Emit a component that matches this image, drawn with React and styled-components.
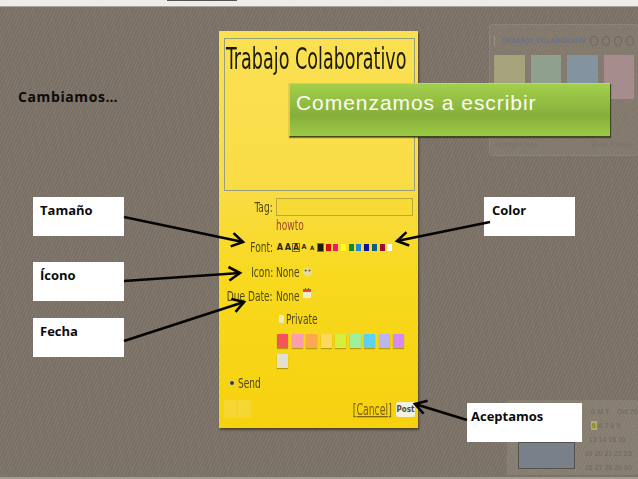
import styled, { createGlobalStyle } from "styled-components";

const GlobalStyle = createGlobalStyle`
  html, body { margin: 0; padding: 0; background: #7d7369; }
  body { font-family: "Open Sans", "Liberation Sans", sans-serif; }
`;

const Slide = styled.div`
  position: relative;
  width: 638px;
  height: 479px;
  overflow: hidden;
  background-color: #7e7469;
  background-image: repeating-linear-gradient(
    115deg,
    rgba(255, 255, 255, 0.035) 0 1px,
    rgba(0, 0, 0, 0.035) 1px 3px
  );
`;

const TopBar = styled.div`
  position: absolute;
  inset: 0 0 auto 0;
  height: 6px;
  background: #ececea;
  border-bottom: 1px solid #a8a39d;
`;

const TopMark = styled.div`
  position: absolute;
  left: 167px;
  top: 0;
  width: 70px;
  height: 1px;
  background: #55534f;
`;

const BottomLine = styled.div`
  position: absolute;
  inset: auto 0 0 0;
  height: 2px;
  background: #a39c93;
`;

const Heading = styled.div`
  position: absolute;
  left: 18px;
  top: 87px;
  font-size: 14px;
  font-weight: 700;
  letter-spacing: 0.6px;
  color: #0c0b0a;
`;

const Label = styled.div`
  position: absolute;
  left: ${(p) => p.$x}px;
  top: ${(p) => p.$y}px;
  width: ${(p) => p.$w}px;
  height: 39px;
  box-sizing: border-box;
  padding: 4px ${(p) => p.$pad}px;
  background: #fff;
  font-size: 13px;
  font-weight: 700;
  color: #0b0b0b;
`;

const Note = styled.div`
  position: absolute;
  left: 219px;
  top: 31px;
  width: 199px;
  height: 397px;
  box-sizing: border-box;
  padding: 7px 3px 0 5px;
  display: flex;
  flex-direction: column;
  background: linear-gradient(180deg, #fbe053 0%, #f9dc45 40%, #f8d91e 62%, #f6d10e 100%);
  box-shadow: 1px 2px 2px rgba(50, 40, 20, 0.65);
  font-family: "DejaVu Sans Condensed", "DejaVu Sans", sans-serif;
  font-size: 12px;
  color: #4f4812;
`;

const TitleArea = styled.div`
  height: 151px;
  flex: none;
  border: 1px solid #97a07b;
  overflow: hidden;
`;

const NoteTitle = styled.div`
  font-size: 21px;
  color: #1b1a08;
  white-space: nowrap;
  margin: 3px 0 0 1px;
  transform: scale(0.93, 1.4);
  transform-origin: left top;
`;

const FormRow = styled.div`
  display: grid;
  grid-template-columns: 49px 1fr;
  column-gap: 3px;
  align-items: center;
  height: ${(p) => p.$h}px;
  margin-top: ${(p) => p.$top || 0}px;
`;

const RowLabel = styled.div`
  justify-self: end;
  white-space: nowrap;
  transform: scale(0.84, 1.2);
  transform-origin: right center;
`;

const RowValue = styled.div`
  display: flex;
  align-items: center;
  color: ${(p) => p.$color || "inherit"};
  white-space: nowrap;
`;

const Tall = styled.span`
  display: inline-block;
  width: ${(p) => p.$w}px;
  transform: scale(0.84, 1.2);
  transform-origin: left center;
`;

const TagInput = styled.div`
  width: 135px;
  height: 16px;
  border: 1px solid #b9a83a;
  background: #f8da35;
`;

const SizeLetter = styled.span`
  width: 8px;
  text-align: center;
  font-size: ${(p) => p.$s}px;
  line-height: 9px;
  font-weight: 700;
  color: #2a2710;
  box-shadow: ${(p) => (p.$on ? "inset 0 0 0 1px #6f6a3a" : "none")};
`;

const FontColors = styled.div`
  display: flex;
  align-items: center;
  gap: 2.7px;
  margin-left: 2px;
`;

const FontColor = styled.span`
  width: 5px;
  height: 7px;
  background: ${(p) => p.$c};
  outline: ${(p) => (p.$on ? "1px solid #80783f" : "none")};
`;

const RoundButton = styled.span`
  width: 9px;
  height: 8px;
  border-radius: 4px;
  margin-left: 2px;
  background: #e6dc9e;
  color: #5b5836;
  font-size: 7px;
  line-height: 7px;
  text-align: center;
`;

const CalIcon = styled.svg`
  width: 8px;
  height: 10px;
  margin: -6px 0 0 2px;
`;

const Check = styled.span`
  width: 5px;
  height: 8px;
  margin: 0 2px 0 3px;
  background: #eee9c0;
  border-radius: 1px;
`;

const Palette = styled.div`
  display: grid;
  grid-template-columns: repeat(9, 11px);
  gap: 6px 3.5px;
  margin: 3px 0 0 53px;
`;

const Swatch = styled.span`
  height: 14px;
  background: linear-gradient(180deg, ${(p) => p.$c}, ${(p) => p.$c}ee);
  box-shadow: 0 1px 1px rgba(120, 100, 0, 0.5);
`;

const SendRow = styled.div`
  display: flex;
  align-items: center;
  gap: 3px;
  margin: 8px 0 0 5px;
`;

const Radio = styled.span`
  width: 4px;
  height: 4px;
  border-radius: 50%;
  background: #3c3a20;
  border: 1px solid #e6dfa8;
`;

const NoteFooter = styled.div`
  display: flex;
  align-items: center;
  justify-content: space-between;
  margin-top: 10px;
`;

const Stamp = styled.div`
  display: flex;
  gap: 1px;
  opacity: 0.3;
`;

const StampBlock = styled.span`
  width: 13px;
  height: 18px;
  background: #f6e47e;
`;

const Actions = styled.div`
  display: flex;
  align-items: center;
  gap: 4px;
`;

const Cancel = styled.span`
  display: inline-block;
  font-size: 13px;
  color: #6a5a18;
  transform: scale(0.8, 1.2);
  transform-origin: right center;
  & u { color: #7a5c12; }
`;

const PostButton = styled.span`
  width: 19px;
  height: 15px;
  background: #f4f1df;
  border-radius: 2px;
  font-size: 8px;
  line-height: 15px;
  text-align: center;
  font-weight: 700;
  color: #4a4a44;
`;

const Banner = styled.div`
  position: absolute;
  left: 289px;
  top: 83px;
  width: 322px;
  height: 54px;
  box-sizing: border-box;
  padding: 7px 0 0 6px;
  background: linear-gradient(180deg, #a2cf4c 0%, #8fb83f 45%, #86ad3c 60%, #9ccb45 100%);
  border: 1px solid #b6d87a;
  border-right-color: #3f4a22;
  border-bottom-color: #3f4a22;
  box-shadow: 0 1px 1px rgba(0, 0, 0, 0.45);
  font-family: "Liberation Sans", sans-serif;
  font-size: 21px;
  letter-spacing: 0.95px;
  color: #fbfdf4;
`;

const FadedBoard = styled.div`
  position: absolute;
  left: 490px;
  top: 25px;
  width: 148px;
  height: 130px;
  box-sizing: border-box;
  padding: 6px 4px;
  background: rgba(150, 140, 125, 0.3);
  border-radius: 3px;
  box-shadow: 0 0 0 1px rgba(165, 155, 140, 0.4);
  font-family: "DejaVu Sans Condensed", sans-serif;
  font-size: 7px;
  color: #77736c;
  filter: blur(0.5px);
`;

const BoardTitle = styled.div`
  display: flex;
  align-items: center;
  gap: 4px;
  height: 20px;
  font-weight: 700;
  color: #6c7382;
  white-space: nowrap;
`;

const BoardIcon = styled.span`
  width: 8px;
  height: 10px;
  margin-right: 3px;
  background: #9a9284;
`;

const BoardRing = styled.span`
  width: 6px;
  height: 8px;
  flex: none;
  border: 1px solid #6f675d;
  border-radius: 50%;
`;

const BoardTiles = styled.div`
  display: flex;
  gap: 6px;
  margin-top: 4px;
`;

const BoardTile = styled.span`
  width: 31px;
  height: 44px;
  background: ${(p) => p.$c};
`;

const BoardFooter = styled.div`
  display: flex;
  justify-content: space-between;
  margin-top: 42px;
  padding-right: 2px;
  white-space: nowrap;
`;

const FadedCalendar = styled.div`
  position: absolute;
  left: 507px;
  top: 400px;
  width: 131px;
  height: 75px;
  box-sizing: border-box;
  padding: 4px 0 0 11px;
  display: flex;
  align-items: flex-end;
  gap: 8px;
  background: rgba(155, 146, 132, 0.38);
  border-radius: 3px;
  filter: blur(0.4px);
`;

const CalendarPreview = styled.div`
  width: 55px;
  height: 25px;
  flex: none;
  margin-bottom: 6px;
  background: #79808a;
  border: 1px solid #55524b;
`;

const CalendarDays = styled.div`
  font-family: "Liberation Sans", sans-serif;
  font-size: 7px;
  line-height: 14px;
  color: #6f675c;
  white-space: pre;
`;

const Today = styled.span`
  padding: 1px;
  background: #b5ad5c;
  color: #6a6320;
`;

const ArrowLayer = styled.svg`
  position: absolute;
  inset: 0;
  width: 638px;
  height: 479px;
  pointer-events: none;
`;

const fontColors = ["#1a1a10", "#d40f0f", "#f0187a", "#ffff10", "#0c8a2c", "#1e88d8", "#10109a", "#0f5f80", "#9a1030", "#ffffff"];
const noteColors = ["#f4505a", "#fb9cb0", "#fba850", "#fdd860", "#d4f040", "#9cf0a0", "#58d0f8", "#b8b4f8", "#d488f8", "#e0e0d8"];
const arrows = [
  [124, 217, 243, 242],
  [124, 281, 240, 273],
  [124, 341, 244, 302],
  [490, 222, 397, 241],
  [467, 420, 415, 404],
];

function Arrow({ from }) {
  const [x1, y1, x2, y2] = from;
  const a = Math.atan2(y2 - y1, x2 - x1);
  const wing = (d) => `${x2 - 13 * Math.cos(a + d)},${y2 - 13 * Math.sin(a + d)}`;
  return (
    <g stroke="#050505" strokeWidth="2.6" fill="none">
      <line x1={x1} y1={y1} x2={x2} y2={y2} />
      <polyline points={`${wing(0.55)} ${x2},${y2} ${wing(-0.55)}`} />
    </g>
  );
}

export default function App() {
  return (
    <Slide>
      <GlobalStyle />
      <TopBar>
        <TopMark />
      </TopBar>

      <FadedBoard>
        <BoardTitle>
          <BoardIcon />
          TRABAJO_COLABORATIV
          <BoardRing />
          <BoardRing />
          <BoardRing />
          <BoardRing />
        </BoardTitle>
        <BoardTiles>
          <BoardTile $c="#a6a27c" />
          <BoardTile $c="#8fa08f" />
          <BoardTile $c="#8393a0" />
          <BoardTile $c="#a68c8c" />
        </BoardTiles>
        <BoardFooter>
          <span>Highlight New</span>
          <span>Show Private</span>
        </BoardFooter>
      </FadedBoard>

      <FadedCalendar>
        <CalendarPreview />
        <CalendarDays>
          {"    S M T    Oct 20\n    "}
          <Today>9</Today>
          {" 6 7 8 9\n   13 14 15 16\n 19 20 21 22 23\n 26 27 28 29 30"}
        </CalendarDays>
      </FadedCalendar>

      <Heading>Cambiamos…</Heading>
      <Label $x={33} $y={197} $w={91} $pad={7}>Tamaño</Label>
      <Label $x={33} $y={262} $w={91} $pad={7}>Ícono</Label>
      <Label $x={33} $y={318} $w={91} $pad={7}>Fecha</Label>
      <Label $x={484} $y={197} $w={91} $pad={8}>Color</Label>
      <Label $x={467} $y={403} $w={115} $pad={4}>Aceptamos</Label>

      <Note>
        <TitleArea>
          <NoteTitle>Trabajo Colaborativo</NoteTitle>
        </TitleArea>
        <FormRow $h={19} $top={6}>
          <RowLabel>Tag:</RowLabel>
          <TagInput />
        </FormRow>
        <FormRow $h={18}>
          <span />
          <RowValue $color="#a2482a">
            <Tall $w={32}>howto</Tall>
          </RowValue>
        </FormRow>
        <FormRow $h={26}>
          <RowLabel>Font:</RowLabel>
          <RowValue>
            <SizeLetter $s={9}>A</SizeLetter>
            <SizeLetter $s={9}>A</SizeLetter>
            <SizeLetter $s={8} $on>A</SizeLetter>
            <SizeLetter $s={7}>A</SizeLetter>
            <SizeLetter $s={6}>A</SizeLetter>
            <FontColors>
              {fontColors.map((c, i) => (
                <FontColor key={c} $c={c} $on={i === 0} />
              ))}
            </FontColors>
          </RowValue>
        </FormRow>
        <FormRow $h={24}>
          <RowLabel>Icon:</RowLabel>
          <RowValue>
            <Tall $w={25}>None</Tall>
            <RoundButton>••</RoundButton>
          </RowValue>
        </FormRow>
        <FormRow $h={23}>
          <RowLabel>Due Date:</RowLabel>
          <RowValue>
            <Tall $w={25}>None</Tall>
            <CalIcon viewBox="0 0 8 10">
              <rect x="0" y="1" width="8" height="9" fill="#f3ecd2" />
              <rect x="0" y="1" width="8" height="3" fill="#d8503a" />
              <rect x="2" y="0" width="1" height="2" fill="#7a5a30" />
              <rect x="5" y="0" width="1" height="2" fill="#7a5a30" />
            </CalIcon>
          </RowValue>
        </FormRow>
        <FormRow $h={24}>
          <span />
          <RowValue>
            <Check />
            <Tall $w={32}>Private</Tall>
          </RowValue>
        </FormRow>
        <Palette>
          {noteColors.map((c) => (
            <Swatch key={c} $c={c} />
          ))}
        </Palette>
        <SendRow>
          <Radio />
          <Tall $w={24}>Send</Tall>
        </SendRow>
        <NoteFooter>
          <Stamp>
            <StampBlock />
            <StampBlock />
          </Stamp>
          <Actions>
            <Cancel>
              [<u>Cancel</u>]
            </Cancel>
            <PostButton>Post</PostButton>
          </Actions>
        </NoteFooter>
      </Note>

      <Banner>Comenzamos a escribir</Banner>

      <ArrowLayer viewBox="0 0 638 479">
        {arrows.map((a) => (
          <Arrow key={a.join()} from={a} />
        ))}
      </ArrowLayer>

      <BottomLine />
    </Slide>
  );
}
